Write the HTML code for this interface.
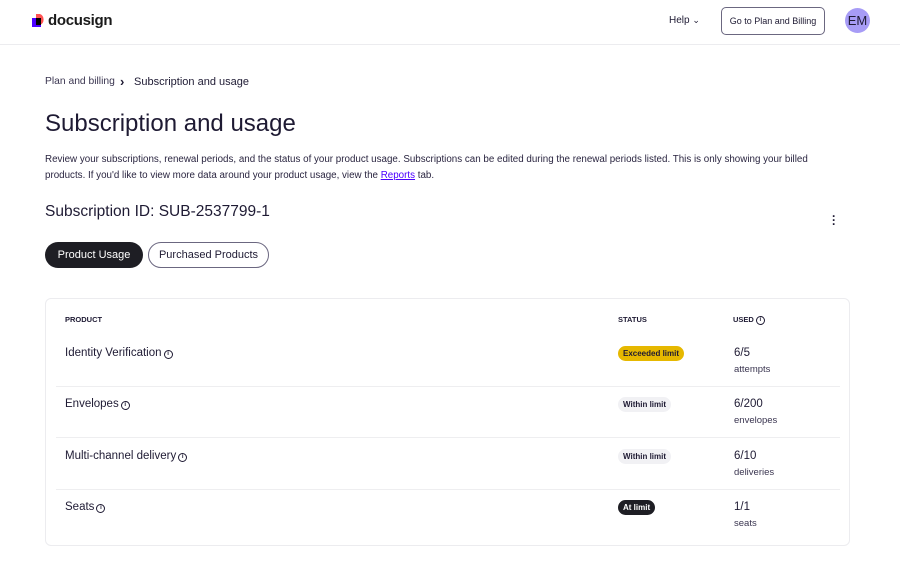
<!DOCTYPE html>
<html><head><style>
*{margin:0;padding:0;box-sizing:border-box}
body{width:900px;height:565px;background:#fff;font-family:"Liberation Sans",sans-serif;color:#1e1a33;position:relative;overflow:hidden}
.a{position:absolute;white-space:nowrap}
.hdr{position:absolute;left:0;top:0;width:900px;height:45px;border-bottom:1px solid #ececef}
.pill{position:absolute;height:15px;border-radius:8px;font-size:8px;font-weight:bold;line-height:15px;padding:0 5px}
.info{display:inline-block;width:9px;height:9px;border:1px solid #1e1a33;border-radius:50%;font-size:6px;line-height:7px;text-align:center;vertical-align:1px;margin-left:2px;font-weight:bold}
.row{position:absolute;left:56px;width:784px;border-top:1px solid #eeeef0}
.nm{font-size:11.5px}
.sm{font-size:9.5px;color:#3a3550}
</style></head><body>
<div class="hdr"></div>
<svg class="a" style="left:32px;top:14px" width="14" height="14"><rect x="0" y="4" width="9" height="9" fill="#4c00ff"/><path d="M4 0h4a6 6 0 0 1 0 11H4z" fill="#ff5252"/><rect x="4" y="4" width="5" height="7" fill="#000"/></svg>
<div class="a" style="left:48px;top:12px;font-size:15px;font-weight:bold;color:#1a1a1a;letter-spacing:-0.3px">docusign</div>
<div class="a" style="left:669px;top:15px;font-size:10px">Help <span style="font-size:9px">&#8964;</span></div>
<div class="a" style="left:721px;top:7px;width:104px;height:28px;border:1px solid #6b6780;border-radius:5px;font-size:9px;text-align:center;line-height:26px">Go to Plan and Billing</div>
<div class="a" style="left:845px;top:8px;width:25px;height:25px;border-radius:50%;background:#a79cf6;font-size:13px;text-align:center;line-height:25px">EM</div>
<div class="a" style="left:45px;top:76px;font-size:10.3px;color:#3a3550">Plan and billing</div>
<div class="a" style="left:120px;top:74px;font-size:13px;font-weight:bold">&#8250;</div>
<div class="a" style="left:134px;top:76px;font-size:11px">Subscription and usage</div>
<div class="a" style="left:45px;top:110px;font-size:24px">Subscription and usage</div>
<div class="a" style="left:45px;top:152px;font-size:9.8px;line-height:16px;white-space:normal;width:790px;color:#2a2540">Review your subscriptions, renewal periods, and the status of your product usage. Subscriptions can be edited during the renewal periods listed. This is only showing your billed products. If you'd like to view more data around your product usage, view the <span style="color:#4c00ff;text-decoration:underline">Reports</span> tab.</div>
<div class="a" style="left:45px;top:203px;font-size:15.5px">Subscription ID: SUB-2537799-1</div>
<div class="a" style="left:832px;top:214px;font-size:12px;line-height:4px;font-weight:bold">·<br>·<br>·</div>
<div class="a" style="left:45px;top:242px;width:98px;height:26px;border-radius:13px;background:#1e1e24;color:#fff;font-size:11px;text-align:center;line-height:26px">Product Usage</div>
<div class="a" style="left:148px;top:242px;width:121px;height:26px;border-radius:13px;border:1px solid #6b6780;font-size:11px;text-align:center;line-height:24px">Purchased Products</div>
<div class="a" style="left:45px;top:298px;width:805px;height:248px;border:1px solid #ececef;border-radius:6px"></div>
<div class="a" style="left:65px;top:315px;font-size:7.5px;font-weight:bold">PRODUCT</div>
<div class="a" style="left:618px;top:315px;font-size:7.5px;font-weight:bold">STATUS</div>
<div class="a" style="left:733px;top:315px;font-size:7.5px;font-weight:bold">USED<span class="info">i</span></div>
<div class="row" style="top:386px"></div><div class="row" style="top:437px"></div><div class="row" style="top:489px"></div>

<div class="a nm" style="left:65px;top:347px">Identity Verification<span class="info">i</span></div>
<div class="pill" style="left:618px;top:346px;background:#e6b800">Exceeded limit</div>
<div class="a nm" style="left:734px;top:347px">6/5</div><div class="a sm" style="left:734px;top:364px">attempts</div>

<div class="a nm" style="left:65px;top:398px">Envelopes<span class="info">i</span></div>
<div class="pill" style="left:618px;top:397px;background:#f1f1f4">Within limit</div>
<div class="a nm" style="left:734px;top:398px">6/200</div><div class="a sm" style="left:734px;top:415px">envelopes</div>

<div class="a nm" style="left:65px;top:450px">Multi-channel delivery<span class="info">i</span></div>
<div class="pill" style="left:618px;top:449px;background:#f1f1f4">Within limit</div>
<div class="a nm" style="left:734px;top:450px">6/10</div><div class="a sm" style="left:734px;top:467px">deliveries</div>

<div class="a nm" style="left:65px;top:501px">Seats<span class="info">i</span></div>
<div class="pill" style="left:618px;top:500px;background:#1e1e24;color:#fff">At limit</div>
<div class="a nm" style="left:734px;top:501px">1/1</div><div class="a sm" style="left:734px;top:518px">seats</div>
</body></html>
